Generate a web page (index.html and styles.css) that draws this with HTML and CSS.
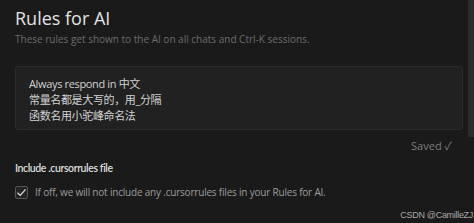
FILE: index.html
```html
<!DOCTYPE html>
<html lang="en">
<head>
    <meta charset="UTF-8">
    <meta name="viewport" content="width=device-width, initial-scale=1.0">
    <title>Rules for AI</title>
    <link rel="stylesheet" href="styles.css">
</head>
<body>
<div class="page">
    <h1 class="title">Rules for AI</h1>
    <p class="subtitle">These rules get shown to the AI on all chats and Ctrl-K sessions.</p>

    <div class="rules-box">
        <div class="rules-text">Always respond in 中文<br>常量名都是大写的，用_分隔<br>函数名用小驼峰命名法</div>
    </div>
    <div class="saved">Saved ✓</div>

    <div class="section-title">Include .cursorrules file</div>
    <label class="check-row">
        <span class="checkbox">
            <svg width="11" height="11" viewBox="0 0 11 11"><path d="M1.5 5.8 L4.2 8.4 L9.6 2.4" fill="none" stroke="#e2e2e2" stroke-width="1.2"/></svg>
        </span>
        <span class="check-label">If off, we will not include any .cursorrules files in your Rules for AI.</span>
    </label>
</div>

<div class="scrollbar"></div>
<div class="watermark">CSDN @CamilleZJ</div>
</body>
</html>
```

FILE: styles.css
```css
body {
    margin: 0;
    background: #1a1a1a;
    font-family: "Open Sans", "Noto Sans CJK SC", sans-serif;
    height: 223px;
    overflow: hidden;
}

.page {
    padding: 7px 11px 0 15px;
}

.title {
    margin: 0;
    font-size: 18px;
    line-height: 22px;
    font-weight: 400;
    color: #e2e2e2;
}

.subtitle {
    margin: 3px 0 0;
    font-size: 10px;
    line-height: 14px;
    color: #6c6c6c;
}

.rules-box {
    margin-top: 20px;
    height: 64px;
    box-sizing: border-box;
    padding: 9px 13px;
    background: #212121;
    border: 1px solid #2c2c2c;
    border-radius: 3px;
}

.rules-text {
    font-size: 11px;
    line-height: 16px;
    letter-spacing: -0.35px;
    color: #d2d2d2;
}

.saved {
    margin-top: 9px;
    padding-right: 11px;
    text-align: right;
    font-size: 11px;
    line-height: 14px;
    color: #7c7c7c;
}

.section-title {
    margin-top: 8px;
    font-family: Lato, sans-serif;
    font-size: 10.5px;
    line-height: 14px;
    font-weight: 600;
    letter-spacing: -0.4px;
    color: #dedede;
}

.check-row {
    display: flex;
    align-items: center;
    gap: 7px;
    margin-top: 10px;
}

.checkbox {
    display: flex;
    align-items: center;
    justify-content: center;
    width: 13px;
    height: 13px;
    box-sizing: border-box;
    border: 1px solid #555;
    border-radius: 2px;
    background: #242424;
}

.check-label {
    font-size: 10px;
    line-height: 14px;
    letter-spacing: -0.2px;
    color: #9c9c9c;
}

.scrollbar {
    position: absolute;
    top: 0;
    right: 0;
    width: 6px;
    height: 137px;
    background: #2b2b2b;
}

.watermark {
    position: absolute;
    right: 1px;
    bottom: 3px;
    font-family: "Liberation Sans", sans-serif;
    font-size: 9px;
    letter-spacing: -0.3px;
    color: #a8a8a8;
}
```
